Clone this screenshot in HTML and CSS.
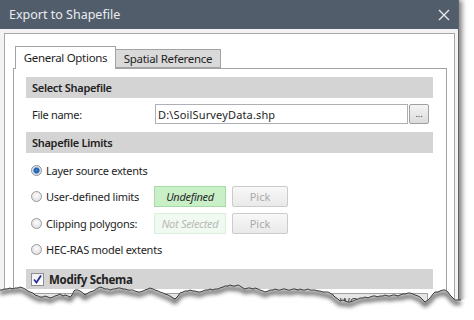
FILE: index.html
```html
<!DOCTYPE html>
<html>
<head>
<meta charset="utf-8">
<link rel="stylesheet" href="styles.css">
</head>
<body>
<div class="window">
  <div class="titlebar">
    <span class="title">Export to Shapefile</span>
    <svg class="close" width="12" height="12" viewBox="0 0 12 12"><path d="M1 1 L11 11 M11 1 L1 11" stroke="#e6e9ee" stroke-width="1.4" fill="none"/></svg>
  </div>
  <div class="frame">
    <div class="tabs">
      <div class="tab active">General Options</div>
      <div class="tab">Spatial Reference</div>
    </div>
    <div class="panel">
      <div class="section">Select Shapefile</div>
      <div class="file-row">
        <span class="label">File name:</span>
        <div class="input">D:\SoilSurveyData.shp</div>
        <div class="browse">...</div>
      </div>
      <div class="section limits">Shapefile Limits</div>
      <div class="options">
        <div class="opt"><span class="radio checked"></span><span class="opt-label">Layer source extents</span></div>
        <div class="opt"><span class="radio"></span><span class="opt-label">User-defined limits</span><span class="state defined">Undefined</span><span class="pick">Pick</span></div>
        <div class="opt"><span class="radio"></span><span class="opt-label">Clipping polygons:</span><span class="state empty">Not Selected</span><span class="pick">Pick</span></div>
        <div class="opt"><span class="radio"></span><span class="opt-label">HEC-RAS model extents</span></div>
      </div>
      <div class="section schema">
        <span class="checkbox"><svg width="11" height="11" viewBox="0 0 11 11"><path d="M2 5.5 L4.5 8.5 L9 1.5" stroke="#24309a" stroke-width="1.8" fill="none"/></svg></span>
        <span>Modify Schema</span>
      </div>
      <div class="grid">
        <span class="cell c1"></span>
        <span class="cell c2">Field</span>
        <span class="cell c3">WGS</span>
        <span class="cell c4">▲</span>
      </div>
    </div>
  </div>
</div>
<svg class="torn" width="474" height="40" viewBox="0 0 474 40">
  <defs>
    <filter id="blur" x="-5%" y="-100%" width="110%" height="300%"><feGaussianBlur stdDeviation="2"/></filter>
    <clipPath id="below"><path d="M0 10 L4 9 L10 8 L15 8 L20 7 L25 9 L30 12 L35 15 L40 17 L45 16 L50 18 L55 16 L60 14 L65 15 L70 17 L73 13 L75 10 L80 11 L85 15 L90 12 L95 10 L100 7 L105 9 L110 10 L115 9 L120 8 L125 9 L130 10 L135 11 L140 12 L145 10 L150 8 L155 10 L160 12 L165 14 L170 16 L175 19 L178 16 L180 13 L185 11 L190 10 L195 11 L200 12 L205 10 L210 9 L215 9 L220 8 L225 6 L230 5 L235 6 L240 6 L245 9 L250 8 L255 8 L260 10 L265 12 L270 10 L275 9 L280 10 L285 9 L290 10 L295 9 L300 9 L305 10 L310 10 L315 10 L320 11 L325 12 L330 13 L335 17 L340 21 L345 21 L350 22 L355 20 L360 18 L365 17 L370 17 L375 16 L380 16 L385 15 L390 16 L395 15 L400 15 L405 14 L410 13 L415 15 L420 17 L423 20 L425 22 L428 20 L430 18 L433 14 L435 12 L440 11 L445 10 L448 12 L450 15 L453 18 L455 20 L458 20 L461 20 L466 19 L474 19 L474 40 L0 40 Z"/></clipPath>
  </defs>
  <path class="paper" d="M0 10 L4 9 L10 8 L15 8 L20 7 L25 9 L30 12 L35 15 L40 17 L45 16 L50 18 L55 16 L60 14 L65 15 L70 17 L73 13 L75 10 L80 11 L85 15 L90 12 L95 10 L100 7 L105 9 L110 10 L115 9 L120 8 L125 9 L130 10 L135 11 L140 12 L145 10 L150 8 L155 10 L160 12 L165 14 L170 16 L175 19 L178 16 L180 13 L185 11 L190 10 L195 11 L200 12 L205 10 L210 9 L215 9 L220 8 L225 6 L230 5 L235 6 L240 6 L245 9 L250 8 L255 8 L260 10 L265 12 L270 10 L275 9 L280 10 L285 9 L290 10 L295 9 L300 9 L305 10 L310 10 L315 10 L320 11 L325 12 L330 13 L335 17 L340 21 L345 21 L350 22 L355 20 L360 18 L365 17 L370 17 L375 16 L380 16 L385 15 L390 16 L395 15 L400 15 L405 14 L410 13 L415 15 L420 17 L423 20 L425 22 L428 20 L430 18 L433 14 L435 12 L440 11 L445 10 L448 12 L450 15 L453 18 L455 20 L458 20 L461 20 L466 19 L474 19 L474 40 L0 40 Z"/>
  <g clip-path="url(#below)">
    <path class="shadow" filter="url(#blur)" transform="translate(0 3)" d="M0 10 L4 9 L10 8 L15 8 L20 7 L25 9 L30 12 L35 15 L40 17 L45 16 L50 18 L55 16 L60 14 L65 15 L70 17 L73 13 L75 10 L80 11 L85 15 L90 12 L95 10 L100 7 L105 9 L110 10 L115 9 L120 8 L125 9 L130 10 L135 11 L140 12 L145 10 L150 8 L155 10 L160 12 L165 14 L170 16 L175 19 L178 16 L180 13 L185 11 L190 10 L195 11 L200 12 L205 10 L210 9 L215 9 L220 8 L225 6 L230 5 L235 6 L240 6 L245 9 L250 8 L255 8 L260 10 L265 12 L270 10 L275 9 L280 10 L285 9 L290 10 L295 9 L300 9 L305 10 L310 10 L315 10 L320 11 L325 12 L330 13 L335 17 L340 21 L345 21 L350 22 L355 20 L360 18 L365 17 L370 17 L375 16 L380 16 L385 15 L390 16 L395 15 L400 15 L405 14 L410 13 L415 15 L420 17 L423 20 L425 22 L428 20 L430 18 L433 14 L435 12 L440 11 L445 10 L448 12 L450 15 L453 18 L455 20 L458 20 L461 20"/>
  </g>
  <path class="edge" d="M0 10 L2 10 L4 9 L7 9 L10 8 L13 9 L15 8 L18 8 L20 7 L23 8 L25 9 L28 11 L30 12 L33 13 L35 15 L38 16 L40 17 L43 17 L45 16 L48 17 L50 18 L53 17 L55 16 L58 15 L60 14 L63 16 L65 15 L68 16 L70 17 L72 15 L73 13 L74 11 L75 10 L78 10 L80 11 L83 13 L85 15 L88 13 L90 12 L93 11 L95 10 L98 8 L100 7 L103 8 L105 9 L108 9 L110 10 L113 9 L115 9 L118 8 L120 8 L123 9 L125 9 L128 10 L130 10 L133 10 L135 11 L138 12 L140 12 L143 11 L145 10 L148 9 L150 8 L153 9 L155 10 L158 11 L160 12 L163 13 L165 14 L168 15 L170 16 L173 18 L175 19 L177 17 L178 16 L180 13 L183 12 L185 11 L188 11 L190 10 L193 11 L195 11 L198 12 L200 12 L203 11 L205 10 L208 10 L210 9 L213 10 L215 9 L218 9 L220 8 L223 7 L225 6 L228 6 L230 5 L233 6 L235 6 L238 5 L240 6 L243 8 L245 9 L248 8 L250 8 L253 9 L255 8 L258 9 L260 10 L263 11 L265 12 L268 11 L270 10 L273 10 L275 9 L278 10 L280 10 L283 9 L285 9 L288 10 L290 10 L293 9 L295 9 L298 10 L300 9 L303 10 L305 10 L308 9 L310 10 L313 10 L315 10 L318 11 L320 11 L323 12 L325 12 L328 12 L330 13 L333 15 L335 17 L338 19 L340 21 L343 20 L345 21 L348 22 L350 22 L353 21 L355 20 L358 19 L360 18 L363 18 L365 17 L368 18 L370 17 L373 16 L375 16 L378 17 L380 16 L383 16 L385 15 L388 16 L390 16 L393 15 L395 15 L398 16 L400 15 L403 14 L405 14 L408 13 L410 13 L413 14 L415 15 L418 16 L420 17 L423 20 L425 22 L428 20 L430 18 L433 14 L435 12 L438 12 L440 11 L443 10 L445 10 L448 12 L450 15 L453 18 L455 20 L458 20 L461 20"/>
</svg>
</body>
</html>
```
FILE: styles.css
```css
* { box-sizing: border-box; }
html, body {
  margin: 0;
  padding: 0;
  background: #ffffff;
  width: 474px;
  height: 320px;
  overflow: hidden;
  font-family: "Noto Sans", "Open Sans", sans-serif;
  font-size: 11px;
  color: #1e1e1e;
  white-space: nowrap;
}
.window {
  position: relative;
  width: 459px;
  height: 320px;
  background: #f3f3f3;
  box-shadow: 3px 0 5px rgba(0,0,0,0.5);
  border-right: 1px solid #5f636a;
}
.titlebar {
  height: 29px;
  background: #525d6b;
  display: flex;
  align-items: center;
  justify-content: space-between;
  padding: 0 8px 0 9px;
}
.title {
  color: #e9ecf0;
  font-size: 12.5px;
}
.close { display: block; }
.frame {
  margin: 4px 3px 0 4px;
  border: 1px solid #a7a7a7;
  border-bottom: none;
  background: #ffffff;
  height: 300px;
  padding-top: 12px;
}
.tabs {
  display: flex;
  align-items: flex-end;
  padding-left: 10px;
  height: 23px;
  position: relative;
  z-index: 1;
}
.tab {
  border: 1px solid #a3a3a3;
  border-bottom: none;
  font-size: 11.5px;
  letter-spacing: -0.3px;
  display: flex;
  align-items: center;
  justify-content: center;
}
.tab.active {
  width: 101px;
  height: 23px;
  background: #ffffff;
  padding-bottom: 1px;
}
.tab:not(.active) {
  width: 106px;
  height: 19px;
  margin-left: -1px;
  background: #d9d9d9;
  margin-bottom: 1px;
  border-bottom: 1px solid #a3a3a3;
}
.panel {
  margin: -1px 7px 0 8px;
  border: 1px solid #a3a3a3;
  border-bottom: none;
  height: 260px;
  padding: 8px 13px 0 12px;
}
.section {
  height: 21px;
  background: #d4d4d4;
  padding-left: 6px;
  display: flex;
  align-items: center;
  font-weight: 600;
  font-size: 11px;
  letter-spacing: -0.3px;
  color: #222;
}
.file-row {
  display: flex;
  align-items: center;
  height: 20px;
  margin-top: 6px;
}
.label {
  width: 129px;
  padding-left: 6px;
  letter-spacing: -0.3px;
}
.input {
  width: 253px;
  height: 20px;
  border: 1px solid #adb0b5;
  padding-left: 2px;
  display: flex;
  align-items: center;
  background: #fff;
  letter-spacing: 0.15px;
}
.browse {
  width: 20px;
  height: 20px;
  margin-left: 1px;
  border: 1px solid #a0a0a0;
  border-radius: 2px;
  background: linear-gradient(#f4f4f4, #dcdcdc);
  display: flex;
  align-items: center;
  justify-content: center;
  font-size: 9px;
  line-height: 1;
  padding-bottom: 2px;
  color: #333;
}
.limits { margin-top: 8px; }
.options {
  margin-top: 4px;
  display: flex;
  flex-direction: column;
}
.opt {
  display: flex;
  align-items: center;
  height: 26.5px;
}
.radio {
  width: 11px;
  height: 11px;
  border-radius: 50%;
  margin-left: 5px;
  border: 1px solid #9a9a9a;
  background: radial-gradient(circle at 50% 40%, #fdfdfd, #d7d7d7);
  position: relative;
  flex: none;
}
.radio.checked {
  border-color: #8b8f96;
  background: radial-gradient(circle at 50% 50%, #3d7fc9 0, #1f5fa8 2.5px, #c9dbee 3.5px, #f2f2f2 5px);
}
.opt-label {
  width: 108px;
  margin-left: 4px;
  letter-spacing: -0.25px;
}
.state {
  width: 72px;
  height: 21px;
  display: flex;
  align-items: center;
  justify-content: center;
  font-style: italic;
  letter-spacing: -0.3px;
}
.state.defined {
  background: #c8efc6;
  border: 1px solid #a8d9a6;
  color: #2a2a2a;
}
.state.empty {
  background: #f0faf0;
  border: 1px solid #ddeedd;
  color: #b9b9b9;
}
.pick {
  width: 56px;
  height: 21px;
  margin-left: 6px;
  border: 1px solid #cbcbcb;
  border-radius: 2px;
  background: linear-gradient(#f8f8f8, #e9e9e9);
  color: #ababab;
  display: flex;
  align-items: center;
  justify-content: center;
}
.schema {
  margin-top: 6px;
  height: 20px;
  padding-left: 5px;
  font-weight: 700;
  font-size: 11.5px;
  letter-spacing: -0.3px;
}
.checkbox {
  width: 13px;
  height: 13px;
  border: 1px solid #8e8f8f;
  background: linear-gradient(#f0f0f0, #ffffff);
  display: flex;
  align-items: center;
  justify-content: center;
  margin-right: 5px;
}
.grid {
  margin-top: 4px;
  display: flex;
  height: 16px;
  border: 1px solid #a0a0a0;
  margin-right: 5px;
  background: #e6e6e6;
}
.cell {
  border-right: 1px solid #b8b8b8;
  padding-left: 6px;
  display: flex;
  align-items: center;
  color: #444;
}
.c1 { width: 39px; }
.c2 { width: 270px; }
.c3 { width: 80px; }
.c4 { flex: 1; border-right: none; font-size: 8px; color: #555; }
.torn {
  position: absolute;
  left: 0;
  top: 280px;
  display: block;
}
.paper { fill: #ffffff; }
.shadow { fill: none; stroke: #333; stroke-width: 3.5; opacity: 0.85; }
.edge { fill: none; stroke: #3a3a3a; stroke-width: 1; }
```
